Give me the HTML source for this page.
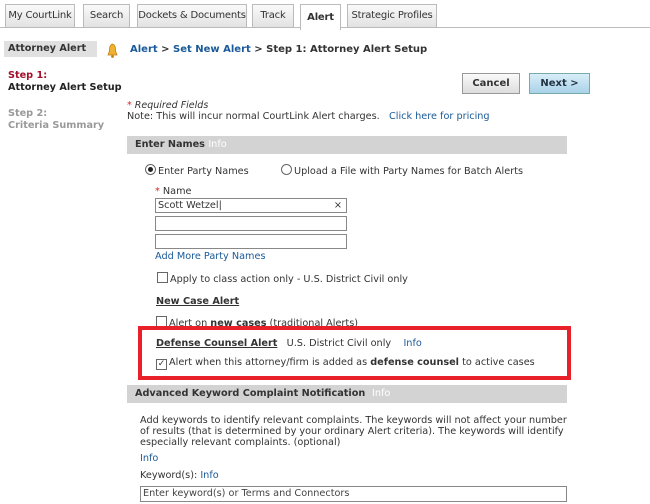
<!DOCTYPE html>
<html><head><style>
body{margin:0;width:650px;height:504px;overflow:hidden;background:#fff;font-family:"DejaVu Sans","Liberation Sans",sans-serif;font-size:9.7px;color:#333;position:relative}
.a{position:absolute;white-space:nowrap}
.tab{position:absolute;top:4px;height:22px;border:1px solid #bbb;background:linear-gradient(#fafafa,#e2e2e2);font-size:10px;line-height:22px;text-align:center;color:#333;white-space:nowrap;letter-spacing:-0.2px}
.lnk{color:#1a5a9a}
.bar{position:absolute;left:127px;width:440px;height:18px;background:#d3d3d3;font-weight:bold;font-size:9.7px;line-height:18px;padding-left:8px;box-sizing:border-box;color:#333;white-space:nowrap}
.inp{position:absolute;left:155px;width:192px;height:15px;border:1px solid #888;box-sizing:border-box;background:#fff}
.cb{display:inline-block;width:9px;height:9px;border:1px solid #666;vertical-align:-1px;margin-right:2px;background:#fff;font-size:9px;line-height:9px;text-align:center}
.rd{display:inline-block;width:9px;height:9px;border:1px solid #666;border-radius:50%;vertical-align:-1px;margin-right:2px;position:relative}
</style></head><body>
<div class="a" style="left:0;top:27px;width:650px;height:1px;background:#bbb"></div>
<div class="tab" style="left:5px;width:68px">My CourtLink</div>
<div class="tab" style="left:83px;width:45px">Search</div>
<div class="tab" style="left:137px;width:108px">Dockets &amp; Documents</div>
<div class="tab" style="left:252px;width:40px">Track</div>
<div class="tab" style="left:300px;width:39px;height:25px;background:#fff;border-bottom:none;font-weight:bold;line-height:26px">Alert</div>
<div class="tab" style="left:347px;width:88px">Strategic Profiles</div>

<div class="a" style="left:4px;top:41px;width:93px;height:16px;background:#e0e0e0;font-weight:bold;line-height:16px;padding-left:4px;box-sizing:border-box">Attorney Alert</div>
<div class="a" style="left:8px;top:70px;color:#a0102a;font-weight:bold;line-height:12px">Step 1:</div>
<div class="a" style="left:8px;top:82px;font-weight:bold;color:#222">Attorney Alert Setup</div>
<div class="a" style="left:8px;top:108px;color:#999;font-weight:bold;line-height:12px">Step 2:<br>Criteria Summary</div>

<svg class="a" style="left:107px;top:43px" width="11" height="16" viewBox="0 0 11 16"><path d="M5.5 1 C2.5 2 2.5 5 2.5 8 L1 12 H10 L8.5 8 C8.5 5 8.5 2 5.5 1Z" fill="#f0b030" stroke="#c08010" stroke-width=".8"/><circle cx="5.5" cy="13.5" r="1.4" fill="#c08010"/></svg>
<div class="a" style="left:130px;top:44px;font-weight:bold;font-size:10px"><span class="lnk">Alert</span> &gt; <span class="lnk">Set New Alert</span> &gt; Step 1: Attorney Alert Setup</div>

<div class="a" style="left:462px;top:73px;width:58px;height:21px;border:1px solid #999;box-sizing:border-box;background:linear-gradient(#fafafa,#ddd);font-weight:bold;font-size:10px;text-align:center;line-height:19px">Cancel</div>
<div class="a" style="left:529px;top:73px;width:61px;height:21px;border:1px solid #7aa;box-sizing:border-box;background:linear-gradient(#d8eef8,#a9d2e8);font-weight:bold;font-size:10px;text-align:center;line-height:19px;color:#234">Next &gt;</div>

<div class="a" style="left:127px;top:100px;font-style:italic;font-size:9.5px"><span style="color:#d22">*</span> Required Fields</div>
<div class="a" style="left:127px;top:111px">Note: This will incur normal CourtLink Alert charges. &nbsp; <span class="lnk">Click here for pricing</span></div>

<div class="bar" style="top:136px">Enter Names <span style="color:#fff;font-weight:normal">Info</span></div>
<div class="a" style="left:145px;top:164px"><span class="rd"><span style="position:absolute;left:2px;top:2px;width:5px;height:5px;border-radius:50%;background:#222"></span></span>Enter Party Names</div>
<div class="a" style="left:281px;top:164px"><span class="rd"></span>Upload a File with Party Names for Batch Alerts</div>
<div class="a" style="left:155px;top:186px"><span style="color:#d22">*</span> Name</div>
<div class="inp" style="top:198px;padding-left:2px;line-height:13px">Scott Wetzel|<span style="position:absolute;right:4px">×</span></div>
<div class="inp" style="top:216px"></div>
<div class="inp" style="top:234px"></div>
<div class="a lnk" style="left:155px;top:251px">Add More Party Names</div>
<div class="a" style="left:157px;top:272px"><span class="cb"></span>Apply to class action only - U.S. District Civil only</div>
<div class="a" style="left:156px;top:296px;font-weight:bold;text-decoration:underline">New Case Alert</div>
<div class="a" style="left:156px;top:316px"><span class="cb"></span>Alert on <b>new cases</b> (traditional Alerts)</div>

<div class="a" style="left:138px;top:326px;width:433px;height:54px;border:4px solid #e8202a;box-sizing:border-box;background:#fff"></div>
<div class="a" style="left:156px;top:338px"><b style="text-decoration:underline">Defense Counsel Alert</b> &nbsp; U.S. District Civil only &nbsp; &nbsp;<span class="lnk">Info</span></div>
<div class="a" style="left:156px;top:357px"><span class="cb">✓</span>Alert when this attorney/firm is added as <b>defense counsel</b> to active cases</div>

<div class="bar" style="top:385px">Advanced Keyword Complaint Notification &nbsp;<span style="color:#fff;font-weight:normal">Info</span></div>
<div class="a" style="left:140px;top:415px;line-height:11px">Add keywords to identify relevant complaints. The keywords will not affect your number<br>of results (that is determined by your ordinary Alert criteria). The keywords will identify<br>especially relevant complaints. (optional)</div>
<div class="a lnk" style="left:140px;top:453px">Info</div>
<div class="a" style="left:140px;top:470px">Keyword(s): <span class="lnk">Info</span></div>
<div class="a" style="left:140px;top:486px;width:427px;height:16px;border:1px solid #888;box-sizing:border-box;padding-left:2px;line-height:14px;color:#444">Enter keyword(s) or Terms and Connectors</div>
</body></html>
